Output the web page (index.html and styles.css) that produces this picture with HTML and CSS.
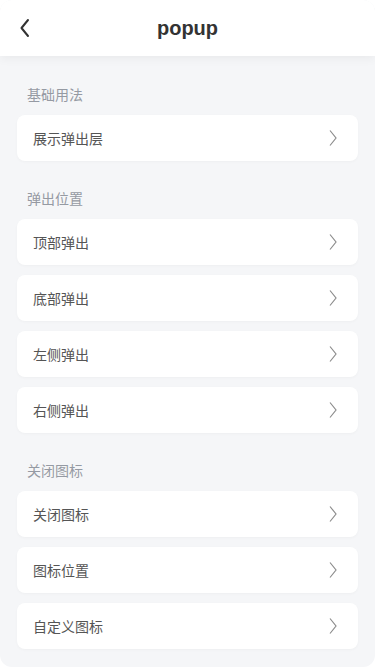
FILE: index.html
```html
<!DOCTYPE html>
<html lang="zh">
<head>
<meta charset="utf-8">
<link rel="stylesheet" href="styles.css">
</head>
<body>
<div class="screen">
  <header class="navbar">
    <span class="back">
      <svg width="12" height="20" viewBox="0 0 12 20"><path d="M9 2 L2.5 10 L9 18" fill="none" stroke="#333" stroke-width="2" stroke-linecap="round" stroke-linejoin="round"/></svg>
    </span>
    <h1 class="title">popup</h1>
  </header>
  <main class="content">
    <section class="group">
      <div class="group-title">基础用法</div>
      <div class="cell"><span>展示弹出层</span><svg class="arrow" width="10" height="18" viewBox="0 0 10 18"><path d="M2 1.5 L8 9 L2 16.5" fill="none" stroke="#8c8c8c" stroke-width="1.2"/></svg></div>
    </section>
    <section class="group">
      <div class="group-title">弹出位置</div>
      <div class="cell"><span>顶部弹出</span><svg class="arrow" width="10" height="18" viewBox="0 0 10 18"><path d="M2 1.5 L8 9 L2 16.5" fill="none" stroke="#8c8c8c" stroke-width="1.2"/></svg></div>
      <div class="cell"><span>底部弹出</span><svg class="arrow" width="10" height="18" viewBox="0 0 10 18"><path d="M2 1.5 L8 9 L2 16.5" fill="none" stroke="#8c8c8c" stroke-width="1.2"/></svg></div>
      <div class="cell"><span>左侧弹出</span><svg class="arrow" width="10" height="18" viewBox="0 0 10 18"><path d="M2 1.5 L8 9 L2 16.5" fill="none" stroke="#8c8c8c" stroke-width="1.2"/></svg></div>
      <div class="cell"><span>右侧弹出</span><svg class="arrow" width="10" height="18" viewBox="0 0 10 18"><path d="M2 1.5 L8 9 L2 16.5" fill="none" stroke="#8c8c8c" stroke-width="1.2"/></svg></div>
    </section>
    <section class="group">
      <div class="group-title">关闭图标</div>
      <div class="cell"><span>关闭图标</span><svg class="arrow" width="10" height="18" viewBox="0 0 10 18"><path d="M2 1.5 L8 9 L2 16.5" fill="none" stroke="#8c8c8c" stroke-width="1.2"/></svg></div>
      <div class="cell"><span>图标位置</span><svg class="arrow" width="10" height="18" viewBox="0 0 10 18"><path d="M2 1.5 L8 9 L2 16.5" fill="none" stroke="#8c8c8c" stroke-width="1.2"/></svg></div>
      <div class="cell"><span>自定义图标</span><svg class="arrow" width="10" height="18" viewBox="0 0 10 18"><path d="M2 1.5 L8 9 L2 16.5" fill="none" stroke="#8c8c8c" stroke-width="1.2"/></svg></div>
    </section>
  </main>
</div>
</body>
</html>
```
FILE: styles.css
```css
* { box-sizing: border-box; }
html, body { margin: 0; padding: 0; background: #ffffff; }
body {
  font-family: "Noto Sans CJK SC", "Noto Sans", "Liberation Sans", sans-serif;
  width: 375px;
  height: 667px;
  overflow: hidden;
}
.screen {
  width: 375px;
  height: 667px;
  background: #f5f6f8;
  border-radius: 12px;
  overflow: hidden;
  display: flex;
  flex-direction: column;
}
.navbar {
  height: 56px;
  flex: none;
  background: #ffffff;
  display: flex;
  align-items: center;
  justify-content: center;
  position: relative;
  box-shadow: 0 2px 10px rgba(0, 0, 0, 0.06);
  z-index: 1;
}
.back {
  position: absolute;
  left: 19px;
  top: 18px;
  display: flex;
}
.title {
  margin: 0;
  font-family: "Liberation Sans", "Noto Sans", sans-serif;
  font-size: 20px;
  font-weight: 700;
  color: #333333;
}
.content {
  padding: 0 17px;
  display: flex;
  flex-direction: column;
}
.group {
  display: flex;
  flex-direction: column;
  gap: 10px;
}
.group-title {
  height: 20px;
  box-sizing: content-box;
  padding: 27px 0 1px 10px;
  font-size: 14px;
  line-height: 20px;
  color: #959aa3;
}
.group:first-child .group-title { padding-top: 28px; }
.cell {
  height: 46px;
  background: #ffffff;
  border-radius: 8px;
  display: flex;
  align-items: center;
  justify-content: space-between;
  padding: 0 20px 1px 16px;
  font-size: 14px;
  color: #555555;
  box-shadow: 0 1px 3px rgba(0, 0, 0, 0.03);
}
.arrow { display: block; }
```
